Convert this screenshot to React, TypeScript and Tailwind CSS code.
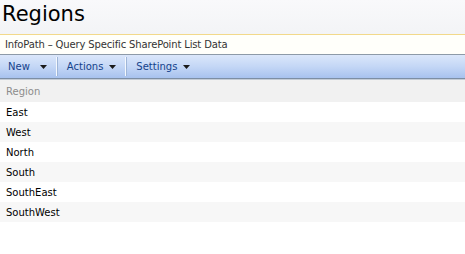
const regions = ["East", "West", "North", "South", "SouthEast", "SouthWest"];

function Arrow() {
  return (
    <svg width="7" height="4" viewBox="0 0 7 4" className="ml-[6px]">
      <path d="M0 0h7L3.5 4z" fill="#1a1a1a" />
    </svg>
  );
}

function Separator() {
  return (
    <div className="flex h-[19px] mx-[5px]">
      <div className="w-px bg-[#f4f8fd]" />
      <div className="w-px bg-[#9fb6d8]" />
    </div>
  );
}

function MenuItem({ label, gap }: { label: string; gap?: string }) {
  return (
    <div className="flex items-center px-[4px] text-[#15428b]">
      <span className={gap}>{label}</span>
      <Arrow />
    </div>
  );
}

export default function App() {
  return (
    <div
      className="w-[465px] h-[254px] bg-white text-[11px] overflow-hidden"
      style={{ fontFamily: "'DejaVu Sans', Verdana, sans-serif" }}
    >
      <div className="h-[34px] bg-gradient-to-b from-[#f9f9fb] to-[#f3f4f6] pl-[2px] pt-[1px]">
        <h1 className="text-[21px] leading-[26px] text-black font-['DejaVu_Sans',sans-serif]">
          Regions
        </h1>
      </div>
      <div className="h-px bg-[#f2d98a]" />
      <div className="h-[19px] bg-[#fffffa] flex items-center pl-[5px] text-[#333] font-['DejaVu_Sans',sans-serif] text-[10px] tracking-[-0.15px]">
        InfoPath – Query Specific SharePoint List Data
      </div>
      <div className="h-px bg-[#8d9aa7]" />
      <div className="h-[23px] bg-gradient-to-b from-[#dbe7fa] via-[#c4d7f6] to-[#a8c2ee] flex items-center pl-[4px] font-['DejaVu_Sans',sans-serif] text-[10px]">
        <MenuItem label="New" gap="mr-[4px]" />
        <Separator />
        <MenuItem label="Actions" />
        <Separator />
        <MenuItem label="Settings" />
      </div>
      <div className="h-px bg-[#7d8ea4]" />
      <div className="h-px bg-[#c4ccd6]" />
      <div className="h-[22px] bg-[#f1f1f1] flex items-center pl-[6px] text-[#8c8c8c] font-['DejaVu_Sans',sans-serif] text-[10px]">
        Region
      </div>
      {regions.map((r, i) => (
        <div
          key={r}
          className={`h-[20px] flex items-center pl-[6px] text-black font-['DejaVu_Sans',sans-serif] text-[10px] ${
            i % 2 === 1 ? "bg-[#f7f7f7]" : "bg-white"
          }`}
        >
          {r}
        </div>
      ))}
    </div>
  );
}
